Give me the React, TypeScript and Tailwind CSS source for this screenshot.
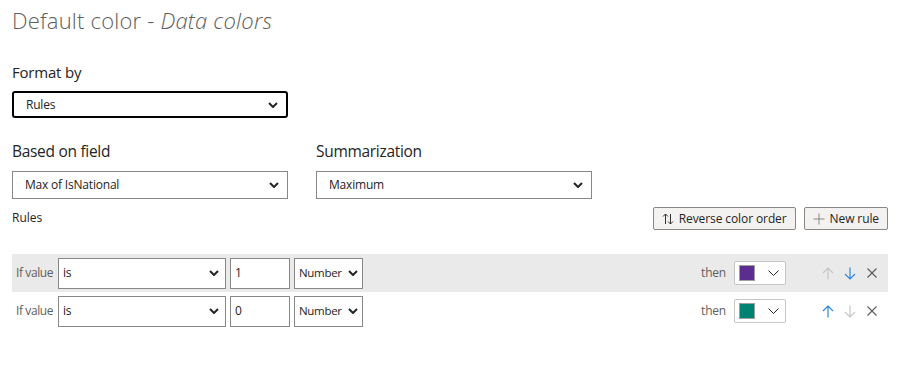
import React from 'react';

const font = { fontFamily: '"Segoe UI", "Open Sans", "Noto Sans", sans-serif' };

function Chevron() {
  return (
    <svg width="10" height="6" viewBox="0 0 10 6" className="shrink-0">
      <path d="M1 1 L5 5 L9 1" fill="none" stroke="#252423" strokeWidth="2" />
    </svg>
  );
}

function FieldSelect({ value, strong }: { value: string; strong?: boolean }) {
  return (
    <div
      className={
        'flex items-center justify-between bg-white pl-3 pr-2 text-[12px] tracking-[-0.2px] text-[#252423] ' +
        (strong ? 'h-[27px] border-2 border-black rounded-[3px]' : 'h-[28px] border border-[#8a8886]')
      }
    >
      <span>{value}</span>
      <Chevron />
    </div>
  );
}

function RuleSelect({ value, className }: { value: string; className: string }) {
  return (
    <div className={'flex h-[31px] items-center justify-between border border-[#8a8886] bg-white pl-1 pr-1.5 text-[12px] tracking-[-0.3px] text-[#252423] ' + className}>
      <span>{value}</span>
      <Chevron />
    </div>
  );
}

function Arrow({ dir, color }: { dir: 'up' | 'down'; color: string }) {
  return (
    <svg width="12" height="13" viewBox="0 0 12 13">
      {dir === 'up' ? (
        <path d="M6 12.5 V1 M1 6 L6 1 L11 6" fill="none" stroke={color} strokeWidth="1.2" />
      ) : (
        <path d="M6 0.5 V12 M1 7 L6 12 L11 7" fill="none" stroke={color} strokeWidth="1.2" />
      )}
    </svg>
  );
}

function RuleRow({ value, color, upOn, downOn, shaded }: { value: string; color: string; upOn: boolean; downOn: boolean; shaded?: boolean }) {
  return (
    <div className={'flex h-[38px] items-center pl-1 ' + (shaded ? 'bg-[#eaeaea]' : '')}>
      <span className="w-[42px] text-[12px] tracking-[-0.4px] text-[#605e5c]">If value</span>
      <RuleSelect value="is" className="w-[168px]" />
      <div className="ml-1 flex h-[31px] w-[60px] items-center border border-[#8a8886] bg-white pl-1 text-[12px] text-[#252423]">{value}</div>
      <RuleSelect value="Number" className="ml-1 w-[69px] !pr-1 !text-[11.5px]" />
      <div className="flex-1" />
      <span className="text-[12px] tracking-[-0.2px] text-[#605e5c]">then</span>
      <div className="ml-[8px] flex h-[24px] w-[52px] items-center justify-between rounded-[2px] border border-[#c8c6c4] bg-white pl-1 pr-[6px]">
        <div className="h-[16px] w-[16px] border border-[#a19f9d]" style={{ backgroundColor: color }} />
        <svg width="11" height="6" viewBox="0 0 11 6">
          <path d="M0.5 0.5 L5.5 5.5 L10.5 0.5" fill="none" stroke="#252423" strokeWidth="1" />
        </svg>
      </div>
      <div className="ml-[36px] mr-[10px] flex items-center gap-[10px]">
        <Arrow dir="up" color={upOn ? '#2b88d8' : '#c8c6c4'} />
        <Arrow dir="down" color={downOn ? '#2b88d8' : '#c8c6c4'} />
        <svg width="12" height="12" viewBox="0 0 12 12">
          <path d="M1.5 1.5 L10.5 10.5 M10.5 1.5 L1.5 10.5" fill="none" stroke="#605e5c" strokeWidth="1.2" />
        </svg>
      </div>
    </div>
  );
}

export default function App() {
  return (
    <div className="h-[385px] w-[901px] overflow-hidden bg-white pl-3 pr-[13px] pt-[4px]" style={font}>
      <h1 className="text-[22px] font-light leading-[32px] tracking-[0.2px] text-[#605e5c]">
        Default color - <span className="italic">Data colors</span>
      </h1>

      <div className="mt-[26px] text-[15px] leading-[20px] tracking-[-0.2px] text-[#252423]">Format by</div>
      <div className="mt-[9px] w-[276px]">
        <FieldSelect value="Rules" strong />
      </div>

      <div className="mt-[22px] flex gap-[28px]">
        <div className="w-[276px]">
          <div className="text-[15.5px] leading-[22px] tracking-[-0.3px] text-[#252423]">Based on field</div>
          <div className="mt-[9px]">
            <FieldSelect value="Max of IsNational" />
          </div>
        </div>
        <div className="w-[276px]">
          <div className="text-[15.5px] leading-[22px] tracking-[-0.3px] text-[#252423]">Summarization</div>
          <div className="mt-[9px]">
            <FieldSelect value="Maximum" />
          </div>
        </div>
      </div>

      <div className="mt-[8px] flex items-start justify-between">
        <span className="mt-[2px] text-[12px] text-[#252423]">Rules</span>
        <div className="flex gap-[8px]">
          <button className="flex h-[23px] items-center gap-[5px] rounded-[2px] border border-[#8a8886] bg-[#f3f2f1] px-[8px] text-[12px] tracking-[-0.1px] text-[#252423]">
            <svg width="12" height="12" viewBox="0 0 12 12">
              <path d="M3.5 11 V1 M1 3.5 L3.5 1 L6 3.5 M8.5 1 V11 M6 8.5 L8.5 11 L11 8.5" fill="none" stroke="#323130" strokeWidth="1" />
            </svg>
            Reverse color order
          </button>
          <button className="flex h-[23px] items-center gap-[5px] rounded-[2px] border border-[#8a8886] bg-[#f3f2f1] px-[8px] text-[12px] tracking-[-0.1px] text-[#252423]">
            <svg width="12" height="12" viewBox="0 0 12 12">
              <path d="M6 0.5 V11.5 M0.5 6 H11.5" fill="none" stroke="#8a8886" strokeWidth="1" />
            </svg>
            New rule
          </button>
        </div>
      </div>

      <div className="mt-[24px]">
        <RuleRow value="1" color="#5c2d91" upOn={false} downOn shaded />
        <RuleRow value="0" color="#008272" upOn downOn={false} />
      </div>
    </div>
  );
}
